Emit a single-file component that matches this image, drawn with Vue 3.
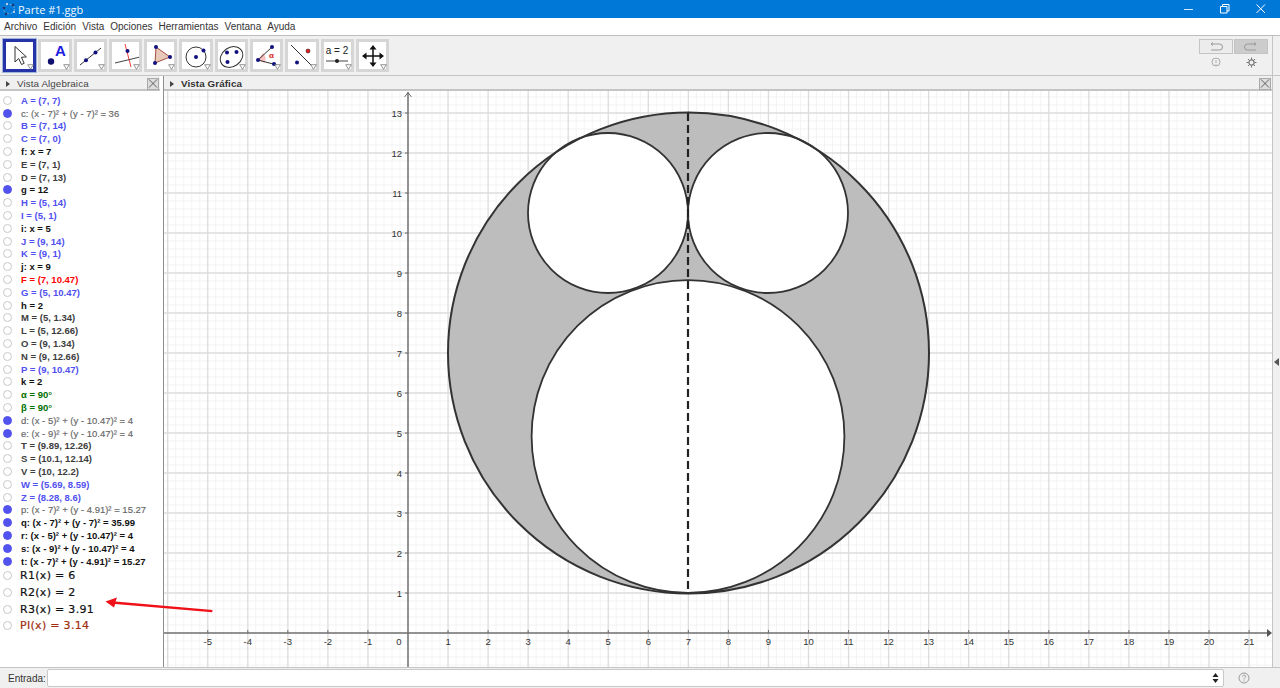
<script setup>
const rows = [
  ['A = (7, 7)', 'b', 0], ['c: (x - 7)² + (y - 7)² = 36', 'g', 1], ['B = (7, 14)', 'b', 0], ['C = (7, 0)', 'b', 0],
  ['f: x = 7', 'k', 0], ['E = (7, 1)', 'd', 0], ['D = (7, 13)', 'd', 0], ['g = 12', 'k', 1],
  ['H = (5, 14)', 'b', 0], ['I = (5, 1)', 'b', 0], ['i: x = 5', 'k', 0], ['J = (9, 14)', 'b', 0],
  ['K = (9, 1)', 'b', 0], ['j: x = 9', 'k', 0], ['F = (7, 10.47)', 'r', 0], ['G = (5, 10.47)', 'b', 0],
  ['h = 2', 'k', 0], ['M = (5, 1.34)', 'd', 0], ['L = (5, 12.66)', 'd', 0], ['O = (9, 1.34)', 'd', 0],
  ['N = (9, 12.66)', 'd', 0], ['P = (9, 10.47)', 'b', 0], ['k = 2', 'k', 0], ['α = 90°', 'v', 0],
  ['β = 90°', 'v', 0], ['d: (x - 5)² + (y - 10.47)² = 4', 'g', 1], ['e: (x - 9)² + (y - 10.47)² = 4', 'g', 1],
  ['T = (9.89, 12.26)', 'd', 0], ['S = (10.1, 12.14)', 'd', 0], ['V = (10, 12.2)', 'd', 0],
  ['W = (5.69, 8.59)', 'b', 0], ['Z = (8.28, 8.6)', 'b', 0], ['p: (x - 7)² + (y - 4.91)² = 15.27', 'g', 1],
  ['q: (x - 7)² + (y - 7)² = 35.99', 'k', 1], ['r: (x - 5)² + (y - 10.47)² = 4', 'k', 1],
  ['s: (x - 9)² + (y - 10.47)² = 4', 'k', 1], ['t: (x - 7)² + (y - 4.91)² = 15.27', 'k', 1]
].map(([text, tone, on]) => ({ text, tone, on }))
const funcs = [
  { text: 'R1(x) = 6', tone: 'k' }, { text: 'R2(x) = 2', tone: 'k' },
  { text: 'R3(x) = 3.91', tone: 'k' }, { text: 'PI(x) = 3.14', tone: 'o' }
]
const menus = ['Archivo', 'Edición', 'Vista', 'Opciones', 'Herramientas', 'Ventana', 'Ayuda']
const X0 = 408, Y0 = 633, U = 40.05, UY = 40
const range = (a, b) => Array.from({ length: b - a + 1 }, (_, i) => a + i)
const px = v => X0 + v * U
const py = v => Y0 - v * UY
const xMinor = range(-31, 108).filter(i => i % 5).map(i => px(i / 5))
const yMinor = range(-8, 135).filter(i => i % 5).map(i => py(i / 5))
const xMajor = range(-6, 21).filter(i => i !== 0)
const yMajor = range(-0, 13).filter(i => i !== 0)
const xLabels = range(-5, 21).filter(i => i !== 0)
const tools = range(1, 11)
</script>

<template>
  <div class="app">
    <header class="title">
      <svg class="logo" width="14" height="14" viewBox="0 0 14 14">
        <ellipse cx="7" cy="7" rx="5.5" ry="4.6" fill="none" stroke="#b9c9de" stroke-width=".7" stroke-dasharray="2 2" />
        <circle cx="2" cy="6" r="1.2" fill="#1d2f6a" /><circle cx="11" cy="3" r="1.2" fill="#1d2f6a" />
        <circle cx="5" cy="2" r="1.1" fill="#d8dce6" /><circle cx="4" cy="12" r="1.2" fill="#1d2f6a" /><circle cx="12" cy="10" r="1.1" fill="#d8dce6" />
      </svg>
      <span class="file">Parte #1.ggb</span>
      <span class="grow"></span>
      <div class="win">
        <svg width="12" height="12" viewBox="0 0 12 12"><path d="M1 6.5h9" stroke="#dbe9f7" fill="none" /></svg>
        <svg width="12" height="12" viewBox="0 0 12 12"><path d="M1.5 3.5h6.5v6.5h-6.5zM3.5 3.5v-2h6.5v6.500h-2" stroke="#fff" fill="none" /></svg>
        <svg width="12" height="12" viewBox="0 0 12 12"><path d="M1.500 1.500l8.500 8.500M10 1.500l-8.500 8.500" stroke="#fff" fill="none" /></svg>
      </div>
    </header>

    <nav class="menu"><span v-for="m in menus" :key="m">{{ m }}</span></nav>

    <section class="toolbar">
      <div class="tools">
        <div v-for="t in tools" :key="t" class="tool" :class="{ active: t === 1 }">
          <svg width="26" height="26" viewBox="0 0 26 26" class="glyph">
            <template v-if="t === 1">
              <path d="M8 3.500v15.500l3.700-3.500 2.800 6 2.700-1.200-2.800-6 5-.4z" fill="#fff" stroke="#333" stroke-width="1" />
            </template>
            <template v-else-if="t === 2">
              <circle cx="9" cy="18.500" r="3.200" fill="#101070" />
              <text x="13" y="12.500" class="glyph-a">A</text>
            </template>
            <template v-else-if="t === 3">
              <path d="M3 22L24 5" stroke="#333" />
              <circle cx="9" cy="17.200" r="2" fill="#101080" /><circle cx="18.500" cy="9.500" r="2" fill="#101080" />
            </template>
            <template v-else-if="t === 4">
              <path d="M12 1l6 23" stroke="#f04040" />
              <path d="M2 20l25-6" stroke="#444" />
              <circle cx="14.500" cy="8" r="2" fill="#101080" />
            </template>
            <template v-else-if="t === 5">
              <path d="M8 4L22 14 7 20z" fill="#e8c8b8" stroke="#a05040" />
              <circle cx="8" cy="4" r="2" fill="#101080" /><circle cx="22" cy="14" r="2" fill="#101080" /><circle cx="7" cy="20" r="2" fill="#101080" />
            </template>
            <template v-else-if="t === 6">
              <circle cx="13" cy="14" r="10" fill="none" stroke="#333" />
              <circle cx="13" cy="14" r="2" fill="#101080" /><circle cx="20.500" cy="7.500" r="2" fill="#101080" />
            </template>
            <template v-else-if="t === 7">
              <ellipse cx="13.500" cy="14" rx="12" ry="9.500" transform="rotate(-35 13.500 14)" fill="none" stroke="#333" />
              <circle cx="9" cy="9.500" r="2" fill="#101080" /><circle cx="18.500" cy="9" r="2" fill="#101080" /><circle cx="9.500" cy="19" r="2" fill="#101080" />
            </template>
            <template v-else-if="t === 8">
              <path d="M4 17l7.500 3.500-1-.5A8 8 0 0 0 9 10z" fill="#f8c0c0" />
              <path d="M18 4L4 17l19 5" fill="none" stroke="#333" />
              <circle cx="18" cy="4" r="2" fill="#101080" /><circle cx="4" cy="17" r="2" fill="#101080" /><circle cx="20" cy="21" r="2" fill="#101080" />
              <text x="15" y="15" class="glyph-alpha">α</text>
            </template>
            <template v-else-if="t === 9">
              <path d="M2 2l23 23" stroke="#333" />
              <circle cx="19" cy="8" r="2" fill="#e02020" stroke="#200" stroke-width=".5" /><circle cx="8" cy="19.500" r="2" fill="#101080" />
            </template>
            <template v-else-if="t === 10">
              <text x="13" y="11" text-anchor="middle" class="glyph-eq">a = 2</text>
              <path d="M2 18h22" stroke="#444" /><circle cx="13" cy="18" r="2" fill="#222" />
            </template>
            <template v-else>
              <path d="M13 6v14M6 13h14" stroke="#111" stroke-width="1.500" />
              <path d="M13 2l3.500 4.500h-7zM13 24l3.500-4.500h-7zM2 13l4.500-3.500v7zM24 13l-4.500-3.500v7z" fill="#111" />
            </template>
          </svg>
          <svg class="caret" width="7" height="6" viewBox="0 0 7 6"><path d="M.7.700h5.600L3.500 5.300z" fill="#fff" stroke="#777" stroke-width=".8" /></svg>
        </div>
      </div>
      <span class="grow"></span>
      <div class="history">
        <div class="undo-row">
          <div class="hbtn"><svg width="16" height="10" viewBox="0 0 16 10"><path d="M3 2h8.500a2.500 2.500 0 0 1 0 6H3M5 .500L3 2l2 1.500" fill="none" stroke="#999" /></svg></div>
          <div class="hbtn off"><svg width="16" height="10" viewBox="0 0 16 10"><path d="M13 2H4.500a2.500 2.500 0 0 0 0 6H13M11 .500L13 2l-2 1.500" fill="none" stroke="#999" /></svg></div>
        </div>
        <div class="aux-row">
          <svg width="10" height="10" viewBox="0 0 10 10"><circle cx="5" cy="5" r="4" fill="none" stroke="#aaa" /><path d="M5 3v3M5 7v1" stroke="#aaa" /></svg>
          <svg width="11" height="11" viewBox="0 0 11 11"><circle cx="5.500" cy="5.500" r="2.600" fill="none" stroke="#777" stroke-width="1.200" /><path d="M5.500.500v2M5.500 8.500v2M.500 5.500h2M8.500 5.500h2M2 2l1.500 1.500M7.500 7.500L9 9M2 9l1.500-1.500M7.500 3.500L9 2" stroke="#777" /></svg>
        </div>
      </div>
      <div class="edge"></div>
    </section>

    <main class="body">
      <aside class="algebra">
        <div class="phead">
          <span class="tri"></span><span class="ptitle">Vista Algebraica</span><span class="grow"></span>
          <span class="close"><svg width="11" height="11" viewBox="0 0 11 11"><path d="M1 1l9 9M10 1l-9 9" stroke="#555" /></svg></span>
        </div>
        <ul class="list">
          <li v-for="r in rows" :key="r.text" class="row" :class="r.tone">
            <span class="dot" :class="{ on: r.on }"></span><span>{{ r.text }}</span>
          </li>
          <li v-for="f in funcs" :key="f.text" class="row func" :class="f.tone">
            <span class="dot"></span><span>{{ f.text }}</span>
          </li>
        </ul>
      </aside>

      <section class="graphics">
        <div class="phead">
          <span class="tri"></span><span class="ptitle strong">Vista Gráfica</span><span class="grow"></span>
          <span class="close"><svg width="11" height="11" viewBox="0 0 11 11"><path d="M1 1l9 9M10 1l-9 9" stroke="#555" /></svg></span>
        </div>
        <svg class="plot" viewBox="164 91 1108 576" width="1108" height="576">
          <rect x="164" y="91" width="1108" height="576" fill="#fff" />
          <g stroke="#f3f3f3" stroke-width="1">
            <line v-for="x in xMinor" :key="'xm' + x" :x1="x" :x2="x" y1="91" y2="667" />
            <line v-for="y in yMinor" :key="'ym' + y" x1="164" x2="1272" :y1="y" :y2="y" />
          </g>
          <g stroke="#dcdcdc" stroke-width="1.300">
            <line v-for="i in xMajor" :key="'xM' + i" :x1="px(i)" :x2="px(i)" y1="91" y2="667" />
            <line v-for="i in yMajor" :key="'yM' + i" x1="164" x2="1272" :y1="py(i)" :y2="py(i)" />
          </g>

          <circle cx="688.500" cy="353" r="240.500" fill="#bdbdbd" />
          <circle cx="608" cy="213" r="80" fill="#fff" />
          <circle cx="768" cy="213" r="80" fill="#fff" />
          <circle cx="688" cy="436.500" r="156.400" fill="#fff" />
          <g fill="none" stroke="#333">
            <circle cx="688.500" cy="353" r="240.500" stroke-width="2" />
            <circle cx="608" cy="213" r="80" stroke-width="1.800" />
            <circle cx="768" cy="213" r="80" stroke-width="1.800" />
            <circle cx="688" cy="436.500" r="156.400" stroke-width="1.800" />
          </g>
          <line x1="688" x2="688" y1="113" y2="593" stroke="#222" stroke-width="2.200" stroke-dasharray="8 4" />

          <g stroke="#6e6e6e" stroke-width="1.500" fill="none">
            <line x1="408" x2="408" y1="92" y2="667" />
            <line x1="164" x2="1271" y1="633" y2="633" />
            <path d="M404.500 97L408 92.500 411.500 97" stroke-width="1" />
          </g>
          <path d="M1267 629l5 4-5 4z" fill="#555" />
          <g stroke="#6e6e6e" stroke-width="1">
            <line v-for="i in xLabels" :key="'tx' + i" :x1="px(i)" :x2="px(i)" y1="630" y2="633" />
            <line v-for="i in yMajor" :key="'ty' + i" x1="405" x2="408" :y1="py(i)" :y2="py(i)" />
          </g>
          <g class="ticks">
            <text v-for="i in xLabels" :key="'lx' + i" :x="px(i)" y="645" text-anchor="middle">{{ i }}</text>
            <text v-for="i in yMajor" :key="'ly' + i" x="402" :y="py(i) + 3.500" text-anchor="end">{{ i }}</text>
            <text x="399" y="645" text-anchor="middle">0</text>
          </g>
        </svg>
      </section>

      <aside class="strip"><span class="handle"></span></aside>
    </main>

    <footer class="input">
      <label>Entrada:</label>
      <div class="field">
        <svg width="7" height="10" viewBox="0 0 7 10"><path d="M3.500 0l3 4h-6zM3.500 10l3-4h-6z" fill="#222" /></svg>
      </div>
      <svg class="qmark" width="12" height="12" viewBox="0 0 12 12"><circle cx="6" cy="6" r="5" fill="none" stroke="#999" /><path d="M4.500 4.600c.2-2 3.200-2 3.200-.1 0 1.300-1.700 1.300-1.700 3M6 8.300v1" fill="none" stroke="#999" /></svg>
    </footer>

    <svg class="arrow" width="120" height="20" viewBox="100 596 120 20"><path d="M105.500 601.500L117 597.500l-1.500 4 97 8.500-.3 2.200-97-8.200-1.200 3.500z" fill="#f01018" /></svg>
  </div>
</template>

<style scoped>
.app { position: relative; width: 1280px; height: 688px; display: flex; flex-direction: column; overflow: hidden; font-family: "Liberation Sans", Arial, sans-serif; background: #f0f0f0; }
.grow { flex: 1; }
.title { flex: 0 0 18px; height: 18px; background: #0078d7; color: #fff; display: flex; align-items: center; padding-left: 2px; box-sizing: border-box; }
.logo { margin-right: 2px; }
.file { font: 11px "Open Sans", sans-serif; color: #f2f8fd; }
.win { display: flex; gap: 24px; padding-right: 13px; }
.menu { flex: 0 0 18px; height: 18px; background: #fff; display: flex; gap: 6px; align-items: center; padding-left: 4px; font: 10px "Liberation Sans", sans-serif; color: #333; border-bottom: 1px solid #bdbdbd; box-sizing: border-box; }
.toolbar { flex: 0 0 40px; height: 40px; display: flex; background: #f0f0f0; border-bottom: 1px solid #c4c4c4; box-sizing: border-box; padding: 3px 0 0 3px; }
.tools { display: flex; gap: 2px; align-items: flex-start; }
.tool { position: relative; width: 33.300px; height: 33px; box-sizing: border-box; border: 3px solid #d6d6d6; background: #fff; display: flex; align-items: center; justify-content: center; }
.tool.active { border: 3px solid #2632a8; outline: 1px solid #9fb4d8; }
.glyph { stroke-width: 1; fill: none; }
.glyph-a { font: bold 15px "Liberation Sans", sans-serif; fill: #2020e0; }
.glyph-alpha { font: bold 8px "Liberation Sans", sans-serif; fill: #e02020; }
.glyph-eq { font: 10px "Liberation Sans", sans-serif; fill: #222; }
.caret { position: absolute; right: -1px; bottom: -1px; }
.history { width: 70px; margin-right: 3px; display: flex; flex-direction: column; }
.undo-row { display: flex; gap: 1px; }
.hbtn { width: 34px; height: 15px; display: flex; align-items: center; justify-content: center; background: #ececec; border: 1px solid #c4c4c4; box-sizing: border-box; }
.hbtn.off { background: #cccccc; }
.aux-row { display: flex; justify-content: center; gap: 25.500px; align-items: center; margin-top: 1px; height: 14px; }
.edge { width: 8px; margin: -3px 0 0 0; border-left: 1px solid #c4c4c4; box-sizing: border-box; }
.body { flex: 1; display: flex; min-height: 0; }
.algebra { width: 164px; flex: none; background: #fff; border-right: 1px solid #8e8e8e; box-sizing: border-box; display: flex; flex-direction: column; }
.graphics { flex: 1; display: flex; flex-direction: column; min-width: 0; border-right: 1px solid #c4c4c4; }
.strip { position: relative; width: 7px; flex: none; background: #f0f0f0; }
.handle { position: absolute; right: 1px; top: 282px; width: 0; height: 0; border-top: 4px solid transparent; border-bottom: 4px solid transparent; border-right: 5px solid #555; }
.phead { flex: 0 0 15px; height: 15px; box-sizing: border-box; display: flex; align-items: center; background: #f0f0f0; border-bottom: 2px solid #c4c4c4; padding: 2px 0 0 6px; gap: 7px; color: #444; font-size: 9.800px; }
.algebra .phead { margin-right: 3px; }
.tri { width: 0; height: 0; border-top: 3.500px solid transparent; border-bottom: 3.500px solid transparent; border-left: 4px solid #444; }
.ptitle { letter-spacing: .1px; }
.strong { font-weight: bold; color: #333; }
.close { width: 10px; height: 10px; background: #ddd; border: 1px solid #aaa; display: flex; margin-right: 1px; box-sizing: content-box; align-items: center; justify-content: center; }
.list { list-style: none; margin: 0; padding: 3px 0 0; flex: 1; }
.row { height: 12.800px; display: flex; align-items: center; gap: 9px; padding-left: 3px; font-size: 9.500px; font-weight: bold; white-space: nowrap; }
.func { height: 16.700px; font: 11px "DejaVu Sans", sans-serif; letter-spacing: .3px; -webkit-text-stroke: .2px currentColor; gap: 8px; }
.func:first-of-type { margin-top: 2px; }
.dot { flex: none; width: 9px; height: 9px; box-sizing: border-box; border-radius: 50%; background: #fff; border: 1px solid #c8c8c8; }
.dot.on { background: #5252ee; border-color: #5252ee; }
.b { color: #5050f0; }
.g { color: #666; font-weight: normal; -webkit-text-stroke: .15px #666; }
.k { color: #111; }
.d { color: #3d3d3d; }
.r { color: #ff0000; }
.v { color: #007000; }
.o { color: #a03010; }
.plot { display: block; flex: 1; }
.ticks text { font: 9.500px "Liberation Sans", sans-serif; fill: #333; }
.input { flex: 0 0 21px; height: 21px; box-sizing: border-box; display: flex; align-items: center; background: #f0f0f0; border-top: 1px solid #c4c4c4; padding-left: 8px; font-size: 10px; color: #333; }
.input label { width: 39px; flex: none; }
.field { width: 1177px; height: 18px; flex: none; box-sizing: border-box; background: #fff; border: 1px solid #c8c8c8; border-radius: 2px; display: flex; align-items: center; justify-content: flex-end; padding-right: 4px; }
.qmark { margin-left: 14px; }
.arrow { position: absolute; left: 100px; top: 596px; pointer-events: none; }
</style>

<style>
html, body { margin: 0; background: #f0f0f0; }
</style>
